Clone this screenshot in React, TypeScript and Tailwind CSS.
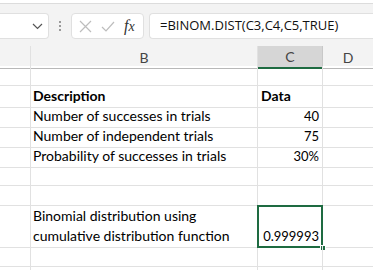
import React from "react";

const line = "border-[#e1e1e1]";

type Row = { h: string; b?: React.ReactNode; c?: React.ReactNode; bold?: boolean; sel?: boolean };

const rows: Row[] = [
  { h: "h-[20px]" },
  { h: "h-[20px]", b: "Description", c: "Data", bold: true },
  { h: "h-[20px]", b: "Number of successes in trials", c: "40" },
  { h: "h-[20px]", b: "Number of independent trials", c: "75" },
  { h: "h-[20px]", b: "Probability of successes in trials", c: "30%" },
  { h: "h-[20px]" },
  { h: "h-[20px]" },
  {
    h: "h-[40px]",
    b: (
      <>
        Binomial distribution using
        <br />
        cumulative distribution function
      </>
    ),
    c: "0.999993",
    sel: true,
  },
  { h: "h-[21px]" },
  { h: "h-[20px]" },
];

export default function App() {
  return (
    <div className="w-[373px] h-[270px] overflow-hidden bg-white" style={{ fontFamily: "Lato, 'Liberation Sans', sans-serif" }}>
      {/* clipped ribbon bottom */}
      <div className="h-[4px] border-b border-[#dcdcdc] bg-white" />
      {/* formula bar */}
      <div className="h-[42px] bg-[#f3f3f3] flex items-start pt-[9px]">
        <div className="w-[49px] h-[26px] bg-white border border-[#e0e0e0] rounded-r-[4px] border-l-0 flex items-center justify-end pr-[5px]">
          <svg width="11" height="7" viewBox="0 0 11 7" fill="none" stroke="#555" strokeWidth="1.2">
            <path d="M1 1l4.5 4.5L10 1" />
          </svg>
        </div>
        <div className="w-[22px] h-[26px] flex flex-col items-center justify-center gap-[2px]">
          <span className="w-[2px] h-[2px] bg-[#9a9a9a]" />
          <span className="w-[2px] h-[2px] bg-[#9a9a9a]" />
          <span className="w-[2px] h-[2px] bg-[#9a9a9a]" />
        </div>
        <div className="w-[73px] h-[26px] bg-white border border-[#e0e0e0] rounded-[4px] flex items-center pl-[7px] gap-[9px]">
          <svg width="13" height="13" viewBox="0 0 13 13" stroke="#bdbdbd" strokeWidth="1.2">
            <path d="M1 1l11 11M12 1L1 12" />
          </svg>
          <svg width="14" height="11" viewBox="0 0 14 11" fill="none" stroke="#bdbdbd" strokeWidth="1.2">
            <path d="M1 6l4 4L13 1" />
          </svg>
          <span className="text-[16px] italic text-[#333] leading-none" style={{ fontFamily: "'Liberation Serif', serif" }}>
            f<span className="text-[14px]">x</span>
          </span>
        </div>
        <div className="ml-[5px] flex-1 h-[26px] bg-white border border-[#e0e0e0] border-r-0 rounded-l-[4px] flex items-center pl-[10px] text-[13px] text-[#111]" style={{ fontFamily: "'Open Sans', sans-serif" }}>
          =BINOM.DIST(C3,C4,C5,TRUE)
        </div>
      </div>
      {/* column headers */}
      <div className="grid grid-cols-[31px_227px_65px_50px] h-[20px] bg-[#f3f3f3] text-[14px] text-[#444]">
        <div className={`border-r ${line} border-b border-b-[#b8b8b8]`} />
        <div className={`border-r ${line} border-b border-b-[#b8b8b8] flex items-center justify-center`}>B</div>
        <div className="bg-[#d6d6d6] border-r border-[#c8c8c8] border-b-2 border-b-[#1e6b41] flex items-center justify-center">C</div>
        <div className="border-b border-b-[#b8b8b8] flex items-center justify-center">D</div>
      </div>
      {/* cells */}
      {rows.map((r, i) => (
        <div key={i} className={`grid grid-cols-[31px_227px_65px_50px] ${r.h} text-[14px] text-black leading-[20px]`}>
          <div className={`border-r border-b ${line}`} />
          <div className={`border-r border-b ${line} px-[2px] flex items-end whitespace-nowrap ${r.bold ? "font-bold" : ""}`}>
            <div className="pb-[1px]">{r.b}</div>
          </div>
          <div
            className={`relative border-r border-b ${line} px-[3px] flex items-end ${
              r.bold ? "font-bold justify-start" : "justify-end text-[13px]"
            }`}
          >
            <div className="pb-[1px]">{r.c}</div>
            {r.sel && (
              <>
                <div className="absolute -left-[1px] -top-[1px] -right-[1px] -bottom-[1px] border-2 border-[#1e6b41]" />
                <div className="absolute -right-[4px] -bottom-[4px] w-[6px] h-[6px] bg-[#1e6b41] border border-white" />
              </>
            )}
          </div>
          <div className={`border-b ${line}`} />
        </div>
      ))}
    </div>
  );
}
